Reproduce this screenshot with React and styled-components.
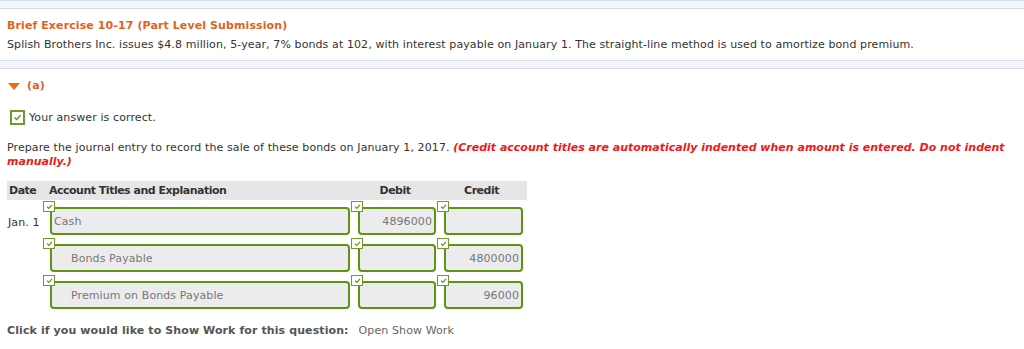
import styled, { createGlobalStyle } from "styled-components";

const GlobalStyle = createGlobalStyle`
  body {
    margin: 0;
    background: #fff;
    font-family: Verdana, "DejaVu Sans", sans-serif;
    font-size: 11px;
    letter-spacing: 0.1px;
    color: #333;
  }
`;

const rows = [
  { account: "Cash", debit: "4896000", credit: "", date: "Jan. 1", indent: false },
  { account: "Bonds Payable", debit: "", credit: "4800000", date: "", indent: true },
  { account: "Premium on Bonds Payable", debit: "", credit: "96000", date: "", indent: true },
];

function Check() {
  return (
    <CheckBox>
      <svg width="9" height="9" viewBox="0 0 9 9">
        <path d="M2 4.6 L3.8 6.3 L7 2.8" fill="none" stroke="#5e9410" strokeWidth="1.2" />
      </svg>
    </CheckBox>
  );
}

export default function App() {
  return (
    <>
      <GlobalStyle />
      <Band />
      <Intro>
        <Title>Brief Exercise 10-17 (Part Level Submission)</Title>
        <Text>
          Splish Brothers Inc. issues $4.8 million, 5-year, 7% bonds at 102, with interest payable on January 1. The straight-line method is used to amortize bond premium.
        </Text>
      </Intro>
      <Band />
      <Part>
        <PartLabel>
          <svg width="12" height="7" viewBox="0 0 12 7">
            <path d="M0 0 H12 L6 7 Z" fill="#ec6a1c" />
          </svg>
          (a)
        </PartLabel>
        <Correct>
          <BigCheck>
            <svg width="11" height="11" viewBox="0 0 11 11">
              <path d="M2.5 5.6 L4.6 7.6 L8.6 3.3" fill="none" stroke="#5e9410" strokeWidth="1.4" />
            </svg>
          </BigCheck>
          Your answer is correct.
        </Correct>
        <Prompt>
          Prepare the journal entry to record the sale of these bonds on January 1, 2017.{" "}
          <Warn>(Credit account titles are automatically indented when amount is entered. Do not indent manually.)</Warn>
        </Prompt>
        <Table>
          <HeadRow>
            <HeadCell>Date</HeadCell>
            <HeadCell $pad="6px">Account Titles and Explanation</HeadCell>
            <HeadCell $center>Debit</HeadCell>
            <HeadCell $center>Credit</HeadCell>
          </HeadRow>
          {rows.map((r, i) => (
            <Row key={i}>
              <DateCell>{r.date}</DateCell>
              <Cell>
                <Check />
                <Field $indent={r.indent}>{r.account}</Field>
              </Cell>
              <Cell>
                <Check />
                <Field $num>{r.debit}</Field>
              </Cell>
              <Cell>
                <Check />
                <Field $num>{r.credit}</Field>
              </Cell>
            </Row>
          ))}
        </Table>
        <Footer>
          <FooterLabel>Click if you would like to Show Work for this question:</FooterLabel>
          <FooterLink>Open Show Work</FooterLink>
        </Footer>
      </Part>
    </>
  );
}

const Band = styled.div`
  height: 7px;
  background: #f3f6fa;
  border-top: 1px solid #d6dee8;
  border-bottom: 1px solid #d2dbe6;
`;

const Intro = styled.div`
  padding: 10px 7px 10px;
  height: 31px;
`;

const Title = styled.div`
  color: #e2621c;
  font-weight: bold;
  font-size: 11px;
  line-height: 14px;
`;

const Text = styled.div`
  margin-top: 5px;
  line-height: 14px;
`;

const Part = styled.div`
  padding: 10px 7px 0;
`;

const PartLabel = styled.div`
  display: flex;
  align-items: center;
  gap: 7px;
  padding-left: 1px;
  color: #e2621c;
  font-weight: bold;
  line-height: 14px;
`;

const Correct = styled.div`
  display: flex;
  align-items: center;
  gap: 4px;
  margin-top: 17px;
  padding-left: 3px;
  line-height: 14px;
`;

const BigCheck = styled.span`
  display: flex;
  align-items: center;
  justify-content: center;
  width: 11px;
  height: 11px;
  border: 2px solid #6f9a2c;
  background: #fff;
`;

const Prompt = styled.div`
  margin-top: 16px;
  line-height: 14px;
`;

const Warn = styled.span`
  color: #f01818;
  font-weight: bold;
  font-style: italic;
  letter-spacing: 0;
`;

const Table = styled.div`
  width: 520px;
  margin-top: 12px;
`;

const cols = "36px 308px 86px 87px";

const HeadRow = styled.div`
  display: grid;
  grid-template-columns: ${cols};
  height: 19px;
  align-items: center;
  background: #e6e6e6;
  font-weight: bold;
  letter-spacing: -0.5px;
  color: #333;
`;

const HeadCell = styled.div`
  padding-left: ${(p) => p.$pad || "2px"};
  text-align: ${(p) => (p.$center ? "center" : "left")};
`;

const Row = styled.div`
  display: grid;
  grid-template-columns: ${cols};
  height: 37px;
`;

const DateCell = styled.div`
  display: flex;
  align-items: center;
  padding: 7px 0 0 1px;
  color: #333;
`;

const Cell = styled.div`
  position: relative;
  padding: 7px 1px 0 7px;
`;

const CheckBox = styled.span`
  position: absolute;
  left: 0;
  top: 1px;
  width: 10px;
  height: 9px;
  display: flex;
  align-items: center;
  justify-content: center;
  background: #fff;
  border: 1px solid #6f9a2c;
`;

const Field = styled.div`
  box-sizing: border-box;
  height: 28px;
  border: 2px solid #5e9410;
  border-radius: 4px;
  background: #ececee;
  color: #777;
  display: flex;
  align-items: center;
  justify-content: ${(p) => (p.$num ? "flex-end" : "flex-start")};
  padding: 0 2px 0 ${(p) => (p.$indent ? "19px" : "2px")};
`;

const Footer = styled.div`
  display: flex;
  gap: 10px;
  margin-top: 13px;
  line-height: 14px;
`;

const FooterLabel = styled.span`
  color: #555;
  font-weight: bold;
`;

const FooterLink = styled.span`
  color: #666;
`;
